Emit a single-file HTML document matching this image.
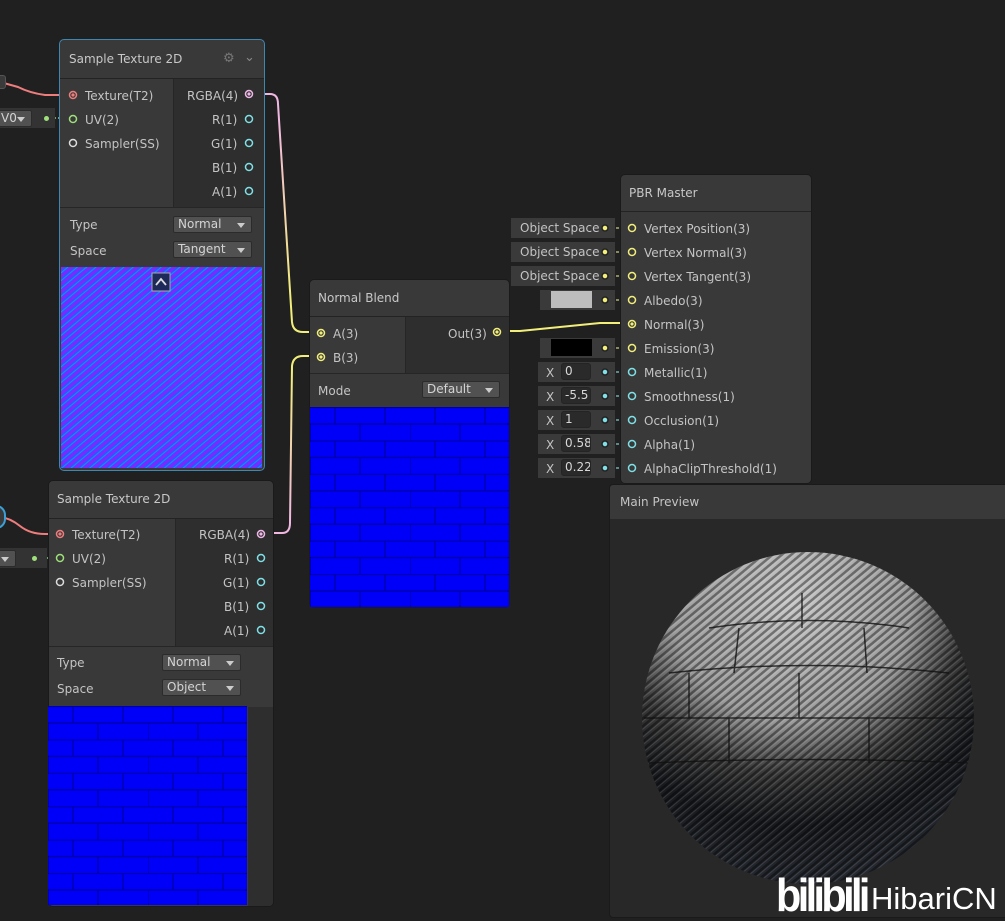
<!DOCTYPE html>
<html><head><meta charset="utf-8"><style>
*{box-sizing:border-box;margin:0;padding:0}
body{width:1005px;height:919px;background:#202020;overflow:hidden;position:relative;font-family:"DejaVu Sans","Liberation Sans",sans-serif;font-size:12px;color:#c4c4c4}
.a{position:absolute}
.node{position:absolute;background:#393939;border-radius:5px;overflow:hidden;border:1px solid #1a1a1a}
.hdr{position:absolute;left:0;right:0;top:0;font-size:12px;color:#c8c8c8;border-bottom:1px solid #232323}
.t{position:absolute;white-space:nowrap;font-size:12px;color:#c4c4c4}
.dd{position:absolute;background:#515151;border-radius:2px;height:17px;border:1px solid #2b2b2b;color:#d4d4d4;padding-left:4px;line-height:15px;font-size:12px}
.dd:after{content:"";position:absolute;right:6px;top:6px;border-left:4px solid transparent;border-right:4px solid transparent;border-top:5px solid #ccc}
.fld{position:absolute;background:#3a3a3a;height:20px}
.num{position:absolute;background:#2a2a2a;border:1px solid #242424;border-radius:3px;height:17px;color:#d8d8d8;padding-left:3px;line-height:15px;overflow:hidden}
</style></head><body>

<svg class="a" style="left:0;top:0" width="1005" height="919">
<defs>
<linearGradient id="w1" gradientUnits="userSpaceOnUse" x1="0" y1="120" x2="0" y2="300"><stop offset="0" stop-color="#f0b8e0"/><stop offset="1" stop-color="#f2ee7a"/></linearGradient>
<linearGradient id="w2" gradientUnits="userSpaceOnUse" x1="0" y1="520" x2="0" y2="370"><stop offset="0" stop-color="#f0b8e0"/><stop offset="1" stop-color="#f2ee7a"/></linearGradient>
</defs>
<path d="M0 82 L18 87 Q30 93 45 95 L66 95" stroke="#ef7d7d" stroke-width="2" fill="none"/>
<path d="M28 118 L68 118" stroke="#6f9f6f" stroke-width="2" fill="none" stroke-dasharray="3 2"/>
<path d="M255 94 L270 94 Q278 94 278 104 L292 322 Q293 332 303 332 L315 332" stroke="url(#w1)" stroke-width="2" fill="none"/>
<path d="M0 517 Q10 518 20 526 Q30 534 45 534 L55 534" stroke="#ef7d7d" stroke-width="2" fill="none"/>
<path d="M30 558 L56 558" stroke="#6f9f6f" stroke-width="2" fill="none" stroke-dasharray="3 2"/>
<path d="M266 533 L282 533 Q290 533 290 523 L292 366 Q293 356 303 356 L315 356" stroke="url(#w2)" stroke-width="2" fill="none"/>
<path d="M503 331 L520 331 L600 323 L627 323" stroke="#f2ee7a" stroke-width="2" fill="none"/>
<g stroke="#8a8a5a" stroke-width="2" stroke-dasharray="3 2">
<path d="M606 228 L626 228"/><path d="M606 252 L626 252"/><path d="M606 276 L626 276"/><path d="M606 300 L626 300"/><path d="M606 348 L626 348"/>
</g>
<g stroke="#5a8a8a" stroke-width="2" stroke-dasharray="3 2">
<path d="M606 372 L626 372"/><path d="M606 396 L626 396"/><path d="M606 420 L626 420"/><path d="M606 444 L626 444"/><path d="M606 468 L626 468"/>
</g>
</svg>

<div class="a" style="left:-6px;top:75px;width:12px;height:14px;background:#3a3a3a;border-radius:3px;border:1px solid #555"></div>
<div class="a" style="left:0;top:108px;width:55px;height:20px;background:#333"></div>
<div class="dd" style="left:-4px;top:110px;width:36px">V0</div>
<div class="a" style="left:44px;top:116px;width:5px;height:5px;border-radius:50%;background:#9fe07a"></div>
<div class="a" style="left:-14px;top:505px;width:20px;height:24px;border:2px solid #3aa0d8;border-radius:10px;background:#3a3a3a"></div>
<div class="a" style="left:0;top:548px;width:47px;height:20px;background:#333"></div>
<div class="dd" style="left:-8px;top:550px;width:24px"></div>
<div class="a" style="left:32px;top:556px;width:5px;height:5px;border-radius:50%;background:#9fe07a"></div>

<div class="node" style="left:59px;top:39px;width:206px;height:432px;border:1px solid #3f86b0">
 <div class="hdr" style="height:39px;padding:12px 0 0 9px">Sample Texture 2D</div>
 <div class="t" style="left:163px;top:11px;color:#777;font-size:13px">⚙</div>
 <div class="t" style="left:184px;top:10px;color:#888;font-size:13px">⌄</div>
 <div class="a" style="left:113px;top:39px;width:92px;height:128px;background:#2e2e2e;border-left:1px solid #262626"></div>
 <div class="a" style="left:0;top:167px;width:206px;height:1px;background:#262626"></div>
</div>
<svg class="a" style="left:0;top:0" width="300" height="300">
<g fill="none" stroke-width="1.5">
<circle cx="73" cy="95" r="3.5" stroke="#ef7d7d"/><circle cx="73" cy="95" r="1.6" fill="#ef7d7d" stroke="none"/>
<circle cx="73" cy="119" r="3.5" stroke="#9fe07a"/>
<circle cx="73" cy="143" r="3.5" stroke="#ddd"/>
<circle cx="249" cy="94" r="3.5" stroke="#f0b8e8"/><circle cx="249" cy="94" r="1.6" fill="#f0b8e8" stroke="none"/>
<circle cx="249" cy="119" r="3.5" stroke="#7fe0e8"/><circle cx="249" cy="143" r="3.5" stroke="#7fe0e8"/><circle cx="249" cy="167" r="3.5" stroke="#7fe0e8"/><circle cx="249" cy="191" r="3.5" stroke="#7fe0e8"/>
</g></svg>
<div class="t" style="left:85px;top:89px">Texture(T2)</div>
<div class="t" style="left:85px;top:113px">UV(2)</div>
<div class="t" style="left:85px;top:137px">Sampler(SS)</div>
<div class="t" style="left:187px;top:89px">RGBA(4)</div>
<div class="t" style="left:212px;top:113px">R(1)</div>
<div class="t" style="left:211px;top:137px">G(1)</div>
<div class="t" style="left:212px;top:161px">B(1)</div>
<div class="t" style="left:212px;top:185px">A(1)</div>
<div class="t" style="left:70px;top:218px">Type</div>
<div class="t" style="left:70px;top:244px">Space</div>
<div class="dd" style="left:173px;top:216px;width:79px">Normal</div>
<div class="dd" style="left:173px;top:241px;width:79px">Tangent</div>
<svg class="a" style="left:61px;top:267px" width="201" height="201">
<defs><pattern id="cf" width="6" height="6" patternUnits="userSpaceOnUse" patternTransform="rotate(-40)">
<rect width="6" height="6" fill="#3a4cff"/><rect width="6" height="2.2" fill="#8a22ff"/><rect y="4" width="6" height="1" fill="#1290ff"/></pattern></defs>
<rect width="201" height="201" fill="url(#cf)"/>
<rect x="91" y="6" width="18" height="18" fill="#1e2a5a" stroke="#aaa" stroke-width="1"/>
<path d="M95 18 L100 12 L105 18" stroke="#ddd" stroke-width="1.8" fill="none"/>
</svg>

<svg width="0" height="0" class="a"><defs>
<pattern id="br" width="100" height="33.4" patternUnits="userSpaceOnUse">
<rect width="100" height="33.4" fill="#0000f8"/>
<g stroke="#0000a8" stroke-width="1.3">
<path d="M0 0.5 H100 M0 17 H100"/><path d="M25 0 V17 M75 0 V17 M0 17 V33.4 M50 17 V33.4"/>
</g></pattern></defs></svg>

<div class="node" style="left:48px;top:480px;width:226px;height:427px">
 <div class="hdr" style="height:38px;padding:11px 0 0 8px">Sample Texture 2D</div>
 <div class="a" style="left:126px;top:38px;width:100px;height:128px;background:#2e2e2e;border-left:1px solid #262626"></div>
 <div class="a" style="left:0;top:165px;width:226px;height:1px;background:#262626"></div>
 <div class="a" style="left:199px;top:226px;width:27px;height:201px;background:#2e2e2e"></div>
</div>
<svg class="a" style="left:48px;top:706px" width="199" height="199"><rect width="199" height="199" fill="url(#br)"/></svg>
<svg class="a" style="left:0;top:480px" width="300" height="200">
<g fill="none" stroke-width="1.5">
<circle cx="60" cy="54" r="3.5" stroke="#ef7d7d"/><circle cx="60" cy="54" r="1.6" fill="#ef7d7d" stroke="none"/>
<circle cx="60" cy="78" r="3.5" stroke="#9fe07a"/>
<circle cx="60" cy="102" r="3.5" stroke="#ddd"/>
<circle cx="261" cy="54" r="3.5" stroke="#f0b8e8"/><circle cx="261" cy="54" r="1.6" fill="#f0b8e8" stroke="none"/>
<circle cx="261" cy="78" r="3.5" stroke="#7fe0e8"/><circle cx="261" cy="102" r="3.5" stroke="#7fe0e8"/><circle cx="261" cy="126" r="3.5" stroke="#7fe0e8"/><circle cx="261" cy="150" r="3.5" stroke="#7fe0e8"/>
</g></svg>
<div class="t" style="left:72px;top:528px">Texture(T2)</div>
<div class="t" style="left:72px;top:552px">UV(2)</div>
<div class="t" style="left:72px;top:576px">Sampler(SS)</div>
<div class="t" style="left:199px;top:528px">RGBA(4)</div>
<div class="t" style="left:224px;top:552px">R(1)</div>
<div class="t" style="left:223px;top:576px">G(1)</div>
<div class="t" style="left:224px;top:600px">B(1)</div>
<div class="t" style="left:224px;top:624px">A(1)</div>
<div class="t" style="left:57px;top:656px">Type</div>
<div class="t" style="left:57px;top:682px">Space</div>
<div class="dd" style="left:162px;top:654px;width:79px">Normal</div>
<div class="dd" style="left:162px;top:679px;width:79px">Object</div>

<div class="node" style="left:309px;top:279px;width:201px;height:329px">
 <div class="hdr" style="height:37px;padding:11px 0 0 8px">Normal Blend</div>
 <div class="a" style="left:95px;top:37px;width:106px;height:57px;background:#2e2e2e;border-left:1px solid #262626"></div>
 <div class="a" style="left:0;top:93px;width:201px;height:1px;background:#262626"></div>
</div>
<svg class="a" style="left:310px;top:407px" width="199" height="200"><rect width="199" height="200" fill="url(#br)"/></svg>
<svg class="a" style="left:300px;top:320px" width="220" height="50">
<g fill="none" stroke-width="1.5" stroke="#f2ee7a">
<circle cx="21" cy="13" r="3.5"/><circle cx="21" cy="37" r="3.5"/><circle cx="197" cy="12" r="3.5"/></g>
<g fill="#f2ee7a"><circle cx="21" cy="13" r="1.6"/><circle cx="21" cy="37" r="1.6"/><circle cx="197" cy="12" r="1.6"/></g>
</svg>
<div class="t" style="left:333px;top:327px">A(3)</div>
<div class="t" style="left:333px;top:351px">B(3)</div>
<div class="t" style="left:448px;top:327px">Out(3)</div>
<div class="t" style="left:318px;top:384px">Mode</div>
<div class="dd" style="left:422px;top:381px;width:78px">Default</div>

<div class="node" style="left:620px;top:174px;width:192px;height:310px">
 <div class="hdr" style="height:37px;padding:11px 0 0 8px">PBR Master</div>
</div>
<div class="fld" style="left:511px;top:218px;width:104px"></div>
<div class="fld" style="left:511px;top:242px;width:104px"></div>
<div class="fld" style="left:511px;top:266px;width:104px"></div>
<div class="t" style="left:520px;top:221px">Object Space</div>
<div class="t" style="left:520px;top:245px">Object Space</div>
<div class="t" style="left:520px;top:269px">Object Space</div>
<div class="fld" style="left:540px;top:290px;width:75px"></div>
<div class="a" style="left:551px;top:291px;width:41px;height:17px;background:#bdbdbd"></div>
<div class="fld" style="left:540px;top:338px;width:75px"></div>
<div class="a" style="left:551px;top:339px;width:41px;height:17px;background:#000"></div>
<div class="fld" style="left:538px;top:362px;width:77px"></div>
<div class="fld" style="left:538px;top:386px;width:77px"></div>
<div class="fld" style="left:538px;top:410px;width:77px"></div>
<div class="fld" style="left:538px;top:434px;width:77px"></div>
<div class="fld" style="left:538px;top:458px;width:77px"></div>
<div class="t" style="left:546px;top:366px">X</div><div class="num" style="left:561px;top:363px;width:30px">0</div>
<div class="t" style="left:546px;top:390px">X</div><div class="num" style="left:561px;top:387px;width:30px">-5.5</div>
<div class="t" style="left:546px;top:414px">X</div><div class="num" style="left:561px;top:411px;width:30px">1</div>
<div class="t" style="left:546px;top:438px">X</div><div class="num" style="left:561px;top:435px;width:30px">0.58</div>
<div class="t" style="left:546px;top:462px">X</div><div class="num" style="left:561px;top:459px;width:30px">0.22</div>
<svg class="a" style="left:590px;top:210px" width="60" height="270">
<g fill="#f2ee7a" stroke="#222" stroke-width="1.5"><circle cx="15" cy="18" r="3"/><circle cx="15" cy="42" r="3"/><circle cx="15" cy="66" r="3"/><circle cx="15" cy="90" r="3"/><circle cx="15" cy="138" r="3"/></g>
<g fill="#7fe0e8" stroke="#222" stroke-width="1.5"><circle cx="15" cy="162" r="3"/><circle cx="15" cy="186" r="3"/><circle cx="15" cy="210" r="3"/><circle cx="15" cy="234" r="3"/><circle cx="15" cy="258" r="3"/></g>
<g fill="none" stroke-width="1.5" stroke="#f2ee7a"><circle cx="42" cy="18" r="3.5"/><circle cx="42" cy="42" r="3.5"/><circle cx="42" cy="66" r="3.5"/><circle cx="42" cy="90" r="3.5"/><circle cx="42" cy="114" r="3.5"/><circle cx="42" cy="138" r="3.5"/></g>
<circle cx="42" cy="114" r="1.6" fill="#f2ee7a"/>
<g fill="none" stroke-width="1.5" stroke="#7fe0e8"><circle cx="42" cy="162" r="3.5"/><circle cx="42" cy="186" r="3.5"/><circle cx="42" cy="210" r="3.5"/><circle cx="42" cy="234" r="3.5"/><circle cx="42" cy="258" r="3.5"/></g>
</svg>
<div class="t" style="left:644px;top:222px">Vertex Position(3)</div>
<div class="t" style="left:644px;top:246px">Vertex Normal(3)</div>
<div class="t" style="left:644px;top:270px">Vertex Tangent(3)</div>
<div class="t" style="left:644px;top:294px">Albedo(3)</div>
<div class="t" style="left:644px;top:318px">Normal(3)</div>
<div class="t" style="left:644px;top:342px">Emission(3)</div>
<div class="t" style="left:644px;top:366px">Metallic(1)</div>
<div class="t" style="left:644px;top:390px">Smoothness(1)</div>
<div class="t" style="left:644px;top:414px">Occlusion(1)</div>
<div class="t" style="left:644px;top:438px">Alpha(1)</div>
<div class="t" style="left:644px;top:462px">AlphaClipThreshold(1)</div>

<div class="a" style="left:609px;top:484px;width:400px;height:434px;background:#282828;border:1px solid #1a1a1a;border-radius:4px;overflow:hidden">
 <div class="a" style="left:0;top:0;right:0;height:34px;background:#393939;color:#c4c4c4;padding:10px 0 0 10px;font-size:12px">Main Preview</div>
</div>
<svg class="a" style="left:609px;top:518px" width="396" height="400">
<defs>
<radialGradient id="sg" cx="0.45" cy="0.15" r="0.9">
<stop offset="0" stop-color="#c8c8c8"/><stop offset="0.4" stop-color="#9c9c9c"/><stop offset="0.58" stop-color="#3a3a3a"/><stop offset="0.75" stop-color="#181a1e"/><stop offset="1" stop-color="#2a2e36"/></radialGradient>
<pattern id="st" width="6" height="6" patternUnits="userSpaceOnUse" patternTransform="rotate(-40)">
<rect width="6" height="2.5" fill="#000" opacity="0.4"/><rect y="3" width="6" height="1" fill="#fff" opacity="0.12"/></pattern>
<clipPath id="cc"><circle cx="199" cy="200" r="166"/></clipPath>
</defs>
<circle cx="199" cy="200" r="166" fill="url(#sg)"/>
<g clip-path="url(#cc)">
<rect width="396" height="400" fill="url(#st)"/>
<g stroke="#111" stroke-width="1.5" fill="none" opacity="0.8">
<path d="M100 110 Q200 95 300 110"/><path d="M60 155 Q200 140 340 155"/><path d="M35 200 H365"/><path d="M40 245 Q200 238 360 245"/>
<path d="M193 75 V110 M130 110 L125 155 M255 110 L258 155 M80 155 V200 M190 155 V200 M120 200 V245 M260 200 V245"/>
</g></g>
</svg>
<div class="a" style="left:776px;top:872px;color:#fff;font-size:46px;font-weight:bold;letter-spacing:-4px;line-height:46px;font-family:'Liberation Sans',sans-serif;transform:scaleX(0.9);transform-origin:left">bilibili</div>
<div class="a" style="left:871px;top:881px;color:#fff;font-size:31px;line-height:36px;font-family:'Liberation Sans',sans-serif">HibariCN</div>
</body></html>
